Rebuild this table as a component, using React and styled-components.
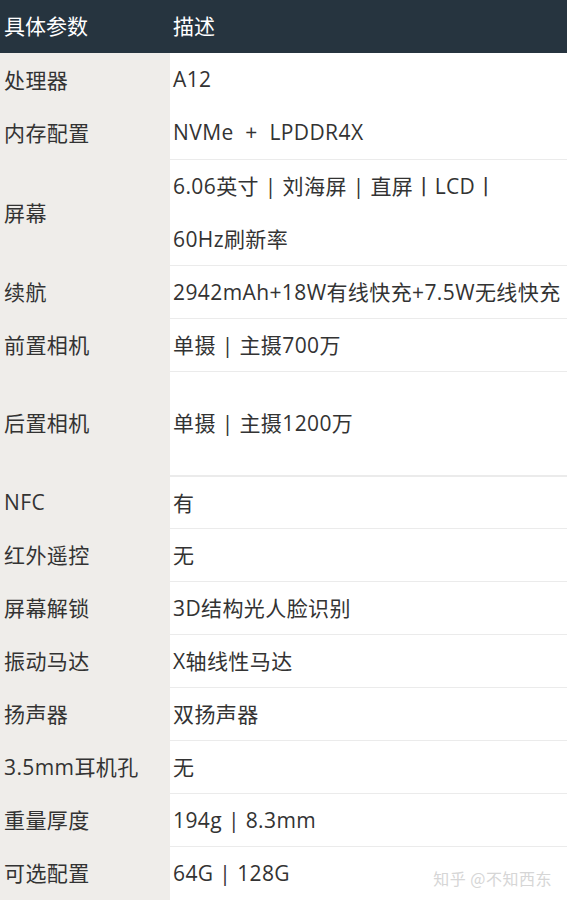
import React from 'react'
import styled, { createGlobalStyle } from 'styled-components'

const GlobalStyle = createGlobalStyle`
    body {
        margin: 0;
        background: #ffffff;
        font-family: "Open Sans", "Noto Sans CJK SC", sans-serif;
    }
`

const specs = [
    { name: '处理器', value: ['A12'], noLine: true },
    { name: '内存配置', value: ['NVMe  +  LPDDR4X'], noLine: true },
    { name: '屏幕', value: ['6.06英寸 | 刘海屏 | 直屏丨LCD丨', '60Hz刷新率'] },
    { name: '续航', value: ['2942mAh+18W有线快充+7.5W无线快充'] },
    { name: '前置相机', value: ['单摄 | 主摄700万'] },
    { name: '后置相机', value: ['单摄 | 主摄1200万'], height: 104 },
    { name: 'NFC', value: ['有'], thick: true },
    { name: '红外遥控', value: ['无'] },
    { name: '屏幕解锁', value: ['3D结构光人脸识别'] },
    { name: '振动马达', value: ['X轴线性马达'] },
    { name: '扬声器', value: ['双扬声器'] },
    { name: '3.5mm耳机孔', value: ['无'] },
    { name: '重量厚度', value: ['194g | 8.3mm'] },
    { name: '可选配置', value: ['64G | 128G'] },
]

const Table = styled.div`
    position: relative;
    width: 567px;
    height: 902px;
    display: flex;
    flex-direction: column;
`

const Header = styled.div`
    display: grid;
    grid-template-columns: 170px 1fr;
    height: 53px;
    background: #26343f;
    color: #ffffff;
    font-size: 21px;
    line-height: 53px;
`

const HeadCell = styled.div`
    padding-left: ${(p) => p.pad}px;
`

const Row = styled.div`
    display: grid;
    grid-template-columns: 170px 1fr;
    height: ${(p) => p.h}px;
    font-size: 21px;
    letter-spacing: 0.4px;
    color: #333333;
`

const Label = styled.div`
    background: #efedea;
    padding-left: 4px;
    padding-bottom: 2px;
    display: flex;
    align-items: center;
    white-space: nowrap;
`

const Value = styled.div`
    border-top: ${(p) => (p.noLine ? '0' : p.thick ? '2px' : '1px')} solid #ebebeb;
    padding-left: 3px;
    display: flex;
    flex-direction: column;
    justify-content: center;
    white-space: pre;
    box-sizing: border-box;
`

const Line = styled.div`
    line-height: 53px;
`

const Watermark = styled.div`
    position: absolute;
    right: 15px;
    bottom: 12px;
    font-size: 16px;
    letter-spacing: 0.5px;
    color: #d6d6d6;
    font-family: "Noto Sans CJK SC", sans-serif;
`

const App = () => {
    return (
        <>
            <GlobalStyle />
            <Table>
                <Header>
                    <HeadCell pad={4}>具体参数</HeadCell>
                    <HeadCell pad={3}>描述</HeadCell>
                </Header>
                {specs.map((item) => (
                    <Row key={item.name} h={item.height || 53 * item.value.length}>
                        <Label>{item.name}</Label>
                        <Value noLine={item.noLine} thick={item.thick}>
                            {item.value.map((v) => (
                                <Line key={v}>{v}</Line>
                            ))}
                        </Value>
                    </Row>
                ))}
                <Watermark>知乎 @不知西东</Watermark>
            </Table>
        </>
    )
}

export default App
